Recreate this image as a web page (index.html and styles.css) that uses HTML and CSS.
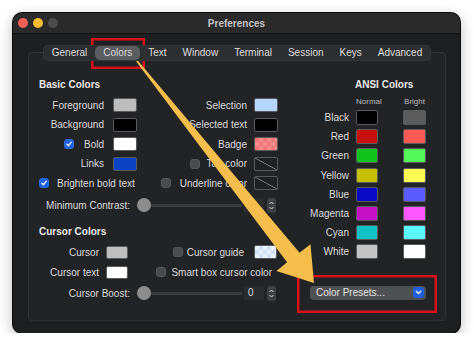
FILE: index.html
```html
<!DOCTYPE html>
<html lang="en">
<head>
<meta charset="utf-8">
<title>Preferences</title>
<link rel="stylesheet" href="styles.css">
</head>
<body>
<div class="window">
  <div class="titlebar">
    <div class="lights"><span class="light red"></span><span class="light yellow"></span><span class="light gray"></span></div>
    <div class="title">Preferences</div>
    <div></div>
  </div>
  <div class="content">
    <div class="tabs">
      <span class="tab">General</span>
      <span class="tab active">Colors</span>
      <span class="tab">Text</span>
      <span class="tab">Window</span>
      <span class="tab">Terminal</span>
      <span class="tab">Session</span>
      <span class="tab">Keys</span>
      <span class="tab">Advanced</span>
    </div>
    <div class="panel">
      <div class="left">
        <h3>Basic Colors</h3>
        <div class="basic">
          <div class="lbl c1">Foreground</div><div class="sw fg"></div>
          <div class="lbl c3">Selection</div><div class="sw sel"></div>

          <div class="lbl c1">Background</div><div class="sw black"></div>
          <div class="lbl c3">Selected text</div><div class="sw black"></div>

          <div class="lbl c1"><span class="cb on"><svg viewBox="0 0 10 10"><path d="M2.3 5.2 4.2 7.2 7.8 2.8"/></svg></span><span class="gap10">Bold</span></div><div class="sw white"></div>
          <div class="lbl c3">Badge</div><div class="sw badge"></div>

          <div class="lbl c1">Links</div><div class="sw links"></div>
          <div class="lbl c3"><span class="cb"></span><span class="gap6">Tab color</span></div><div class="sw none"></div>

          <div class="lbl span12"><span class="cb on"><svg viewBox="0 0 10 10"><path d="M2.3 5.2 4.2 7.2 7.8 2.8"/></svg></span><span class="gap8">Brighten bold text</span></div>
          <div class="lbl c3"><span class="cb"></span><span class="gap9">Underline color</span></div><div class="sw none"></div>
        </div>

        <div class="slider-row contrast">
          <div class="slbl">Minimum Contrast:</div>
          <div class="slider"><span class="knob"></span></div>
          <div class="field"></div>
          <div class="stepper"><svg viewBox="0 0 9 15"><path d="M2.5 6 4.5 4 6.5 6M2.5 9 4.5 11 6.5 9"/></svg></div>
        </div>

        <h3 class="cursor-h">Cursor Colors</h3>
        <div class="cursor">
          <div class="lbl k1">Cursor</div><div class="sw csw cur"></div>
          <div class="lbl k3"><span class="cb"></span><span class="gap4">Cursor guide</span></div><div class="sw guide"></div>

          <div class="lbl k1">Cursor text</div><div class="sw csw white"></div>
          <div class="lbl k34"><span class="cb"></span><span class="gap5">Smart box cursor color</span></div>
        </div>

        <div class="slider-row boost">
          <div class="slbl">Cursor Boost:</div>
          <div class="slider"><span class="knob"></span></div>
          <div class="field">0</div>
          <div class="stepper"><svg viewBox="0 0 9 15"><path d="M2.5 6 4.5 4 6.5 6M2.5 9 4.5 11 6.5 9"/></svg></div>
        </div>
      </div>

      <div class="right">
        <h3 class="ansi-h">ANSI Colors</h3>
        <div class="ansi-cols"><span class="n">Normal</span><span class="b">Bright</span></div>
        <div class="ansi">
          <div class="albl">Black</div><div class="asw n" style="background:#000000"></div><div class="asw b" style="background:#5c5c5c"></div>
          <div class="albl">Red</div><div class="asw n" style="background:#c70f0b"></div><div class="asw b" style="background:#ff5a55"></div>
          <div class="albl">Green</div><div class="asw n" style="background:#10c21a"></div><div class="asw b" style="background:#55f85a"></div>
          <div class="albl">Yellow</div><div class="asw n" style="background:#c6c000"></div><div class="asw b" style="background:#fdfa55"></div>
          <div class="albl">Blue</div><div class="asw n" style="background:#0a0ac4"></div><div class="asw b" style="background:#5a5cff"></div>
          <div class="albl">Magenta</div><div class="asw n" style="background:#c410c4"></div><div class="asw b" style="background:#fd58fd"></div>
          <div class="albl">Cyan</div><div class="asw n" style="background:#10c2c4"></div><div class="asw b" style="background:#5af8fd"></div>
          <div class="albl">White</div><div class="asw n" style="background:#c4c4c4"></div><div class="asw b" style="background:#ffffff"></div>
        </div>
        <div class="popup">
          <span class="ptext">Color Presets...</span>
          <span class="pbtn"><svg viewBox="0 0 11 11"><path d="M3.3 4.3 5.5 6.6 7.7 4.3"/></svg></span>
        </div>
      </div>
    </div>
  </div>
</div>

<svg class="annot" width="474" height="347" viewBox="0 0 474 347">
  <rect x="92.25" y="39.25" width="51.5" height="28.5" fill="none" stroke="#d3121c" stroke-width="2.5"/>
  <rect x="298.25" y="276.25" width="137.5" height="35.5" fill="none" stroke="#d3121c" stroke-width="2.5"/>
  <polygon fill="#f4bd4c" points="137.8,60.4 299.6,252.8 310.5,244.2 314,283 276.4,270.9 287.1,262.3 136.2,61.6"/>
</svg>
</body>
</html>
```

FILE: styles.css
```css
html, body {
  margin: 0;
  background: #ffffff;
}
body {
  padding: 13px 0 0 13px;
  font-family: "Liberation Sans", Arial, sans-serif;
  font-size: 10px;
  color: #dcdcdc;
}

.window {
  width: 447px;
  height: 320px;
  box-sizing: border-box;
  background: #1e1f20;
  border-radius: 9px;
  box-shadow: 0 0 0 1px #0b0b0b, 0 4px 14px rgba(0, 0, 0, 0.3);
  overflow: hidden;
  display: flex;
  flex-direction: column;
}

.titlebar {
  height: 20px;
  flex: none;
  background: #2a2a2b;
  border-bottom: 1px solid #121212;
  display: grid;
  grid-template-columns: 1fr auto 1fr;
  align-items: center;
}
.lights {
  display: flex;
  gap: 5px;
  padding-left: 5px;
}
.light {
  width: 10px;
  height: 10px;
  border-radius: 50%;
}
.light.red { background: #ed5f57; }
.light.yellow { background: #f5bd30; }
.light.gray { background: #4c4c4c; }
.title {
  font-weight: bold;
  color: #c4c4c4;
}

.content {
  flex: 1;
  display: flex;
  flex-direction: column;
  padding: 11px 14px 12px 15px;
  min-height: 0;
}

.tabs {
  align-self: center;
  display: flex;
  height: 16px;
  padding: 0 1px;
  background: #2d2e2f;
  border-radius: 5px;
  box-shadow: inset 0 0 0 1px #333435;
  margin-bottom: -9px;
  position: relative;
  z-index: 1;
}
.tab {
  padding: 0 8px;
  line-height: 16px;
  color: #dedede;
}
.tab.active {
  background: #5b5c5e;
  border-radius: 5px;
  margin: 1px 0;
  line-height: 14px;
}

.panel {
  flex: 1;
  box-sizing: border-box;
  border: 1px solid #303133;
  background: #222324;
  border-radius: 4px;
  display: flex;
  padding: 26px 0 0 10px;
}

h3 {
  margin: 0;
  font-size: 10px;
  line-height: 12px;
  font-weight: bold;
  color: #e8e8e8;
}

.left {
  width: 240px;
  display: flex;
  flex-direction: column;
}

.lbl {
  display: flex;
  align-items: center;
  justify-content: flex-end;
  white-space: nowrap;
}

.basic {
  display: grid;
  grid-template-columns: 74px 24px 117px 24px;
  grid-auto-rows: 14px;
  row-gap: 5.5px;
  margin-top: 7px;
}
.basic .c1 { padding-right: 9px; }
.basic .c3 { padding-right: 7px; }
.basic .span12 {
  grid-column: 1 / span 2;
  justify-content: flex-start;
}

.gap4 { margin-left: 4px; }
.gap5 { margin-left: 5px; }
.gap6 { margin-left: 6px; }
.gap8 { margin-left: 8px; }
.gap9 { margin-left: 9px; }
.gap10 { margin-left: 10px; }

.sw {
  width: 24px;
  height: 14px;
  box-sizing: border-box;
  border: 1px solid #5a5b5d;
  border-radius: 2px;
}
.sw.fg { background: #bdbdbd; }
.sw.sel { background: #b6d6fe; }
.sw.black { background: #000000; }
.sw.white { background: #ffffff; }
.sw.links { background: #0c43c3; }
.sw.badge {
  background: conic-gradient(#f39191 25%, #ff7474 0 50%, #f39191 0 75%, #ff7474 0);
  background-size: 8px 8px;
}
.sw.none {
  background: linear-gradient(to top right, transparent calc(50% - 0.7px), #8c8c8c 50%, transparent calc(50% + 0.7px)), #1f2021;
  border-color: #58595b;
}
.sw.guide {
  width: 23px;
  background: conic-gradient(#cfe2fa 25%, #e9f2fd 0 50%, #cfe2fa 0 75%, #e9f2fd 0);
  background-size: 8px 8px;
}
.sw.csw {
  width: 22px;
  height: 13px;
}
.sw.cur { background: #c0c0c0; }

.cb {
  width: 10px;
  height: 10px;
  flex: none;
  box-sizing: border-box;
  border-radius: 3px;
  background: #4a4b4d;
  border: 1px solid #555658;
  display: flex;
}
.cb.on {
  background: #1e62df;
  border-color: #2c6de6;
}
.cb svg {
  width: 100%;
  height: 100%;
  fill: none;
  stroke: #ffffff;
  stroke-width: 1.5;
  stroke-linecap: round;
  stroke-linejoin: round;
}

.slider-row {
  display: flex;
  align-items: center;
  height: 15px;
}
.slider-row.contrast { margin-top: 7.5px; }
.slider-row.boost { margin-top: 6.5px; }
.slbl {
  width: 91px;
  text-align: right;
  white-space: nowrap;
}
.slider {
  width: 105px;
  height: 15px;
  margin-left: 7px;
  display: flex;
  align-items: center;
  background: linear-gradient(#3a3b3d, #3a3b3d) center / 100% 3px no-repeat;
}
.knob {
  width: 14px;
  height: 14px;
  border-radius: 50%;
  background: #8d8d8e;
}
.field {
  width: 20px;
  height: 14px;
  box-sizing: border-box;
  margin-left: 2px;
  padding-left: 4px;
  line-height: 14px;
  background: #2b2c2d;
  color: #dedede;
}
.stepper {
  width: 9px;
  height: 15px;
  margin-left: 3px;
  border-radius: 3px;
  background: #3e3f41;
  display: flex;
}
.stepper svg {
  width: 9px;
  height: 15px;
  fill: none;
  stroke: #d8d8d8;
  stroke-width: 1;
}

.cursor-h { margin-top: 13.5px; }
.cursor {
  display: grid;
  grid-template-columns: 67px 22px 126px 23px;
  grid-auto-rows: 14px;
  row-gap: 6px;
  margin-top: 7px;
}
.cursor .k1 { padding-right: 7px; }
.cursor .k3 { padding-right: 10px; }
.cursor .k34 {
  grid-column: 3 / span 2;
  padding-right: 5px;
}
.cursor .sw { align-self: center; }

.right {
  margin-left: 21px;
  width: 126px;
  display: flex;
  flex-direction: column;
}
.ansi-h { padding-left: 55px; }
.ansi-cols {
  display: grid;
  grid-template-columns: 49px 29px 48px;
  margin-top: 6px;
  font-size: 8px;
  line-height: 10px;
  color: #bdbdbd;
}
.ansi-cols .n {
  grid-column: 2;
  padding-left: 7px;
  text-align: center;
}
.ansi-cols .b {
  grid-column: 3;
  padding-left: 25px;
  text-align: center;
}
.ansi {
  display: grid;
  grid-template-columns: 49px 29px 48px;
  grid-auto-rows: 15px;
  row-gap: 4.2px;
  margin-top: 3px;
}
.albl {
  text-align: right;
  line-height: 15px;
}
.asw {
  justify-self: end;
  height: 15px;
  box-sizing: border-box;
  border: 1px solid #5a5b5d;
  border-radius: 2px;
}
.asw.n { width: 22px; }
.asw.b { width: 23px; }

.popup {
  margin-top: 26.6px;
  margin-left: 10px;
  width: 116px;
  height: 14px;
  border-radius: 4px;
  background: #4f5052;
  display: flex;
  align-items: center;
  justify-content: space-between;
  padding: 0 2px 0 6px;
  box-sizing: border-box;
}
.ptext { color: #e4e4e4; white-space: nowrap; }
.pbtn {
  width: 11px;
  height: 11px;
  border-radius: 3px;
  background: #1f5fdb;
  display: flex;
}
.pbtn svg {
  width: 11px;
  height: 11px;
  fill: none;
  stroke: #ffffff;
  stroke-width: 1.3;
  stroke-linecap: round;
  stroke-linejoin: round;
}

.annot {
  position: absolute;
  left: 0;
  top: 0;
  pointer-events: none;
}
```
